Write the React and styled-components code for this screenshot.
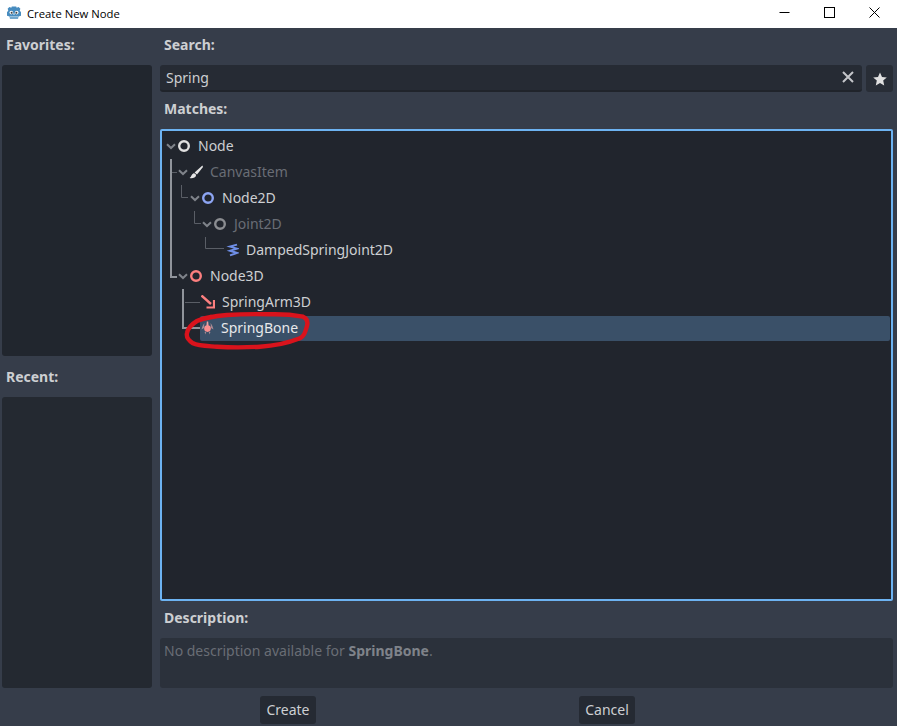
import styled, { createGlobalStyle } from "styled-components"

const GlobalStyle = createGlobalStyle`
    html, body {
        margin: 0;
        padding: 0;
        background: #363d4a;
    }
    * {
        box-sizing: border-box;
    }
`

const Ventana = styled.div`
    width: 897px;
    height: 726px;
    display: flex;
    flex-direction: column;
    overflow: hidden;
    background: #363d4a;
    color: #cdcfd2;
    font-family: "Noto Sans", sans-serif;
    font-size: 14px;
`

const BarraTitulo = styled.div`
    height: 28px;
    flex: none;
    display: flex;
    background: #ffffff;
    color: #000000;
`

const TituloApp = styled.div`
    flex: 1;
    display: flex;
    align-items: center;
    gap: 6px;
    padding: 0 0 2px 7px;
    height: 28px;
    font-family: "Open Sans", sans-serif;
    font-size: 11.3px;
`

const BtnVentana = styled.div`
    width: 45px;
    height: 24px;
    display: flex;
    align-items: center;
    justify-content: center;
`

const Cuerpo = styled.div`
    flex: 1;
    display: grid;
    grid-template-columns: 150px 733px;
    gap: 8px;
    padding: 0 4px 0 2px;
    min-height: 0;
`

const Columna = styled.div`
    display: flex;
    flex-direction: column;
    height: 660px;
`

const Etiqueta = styled.div`
    height: 20px;
    line-height: 20px;
    margin-top: ${props => props.top || 7}px;
    margin-bottom: ${props => props.bottom || 10}px;
    padding-left: 4px;
    font-weight: bold;
    flex: none;
`

const ListaLateral = styled.div`
    flex: 1;
    border-radius: 3px;
    background: ${props => props.color || '#21262e'};
`

const FilaBusqueda = styled.div`
    display: flex;
    gap: 4px;
    height: 27px;
    flex: none;
`

const CajaBusqueda = styled.div`
    flex: 1;
    display: flex;
    align-items: center;
    justify-content: space-between;
    padding: 0 8px 1px 6px;
    border-radius: 3px;
    background: #262b34;
    border-bottom: 2px solid #20242b;
`

const BtnEstrella = styled.div`
    width: 27px;
    display: flex;
    align-items: center;
    justify-content: center;
    border-radius: 3px;
    background: #282d36;
`

const Arbol = styled.div`
    position: relative;
    height: 472px;
    flex: none;
    padding-top: 2px;
    background: #21252d;
    border: 2px solid #6db3f2;
    border-radius: 2px;
`

const Fila = styled.div`
    height: 26px;
    display: flex;
    align-items: center;
    padding-left: ${props => 4 + props.$nivel * 12}px;
    color: ${props => props.$tenue ? '#696d75' : '#cdcfd2'};
`

const TextoNodo = styled.span`
    margin-bottom: 2px;
`

const Flecha = styled.span`
    width: 11px;
    height: 10px;
    flex: none;
    display: flex;
    align-items: center;
    visibility: ${props => props.$oculta ? 'hidden' : 'visible'};
`

const IconoNodo = styled.span`
    width: 14px;
    height: 14px;
    flex: none;
    display: flex;
    margin-right: 7px;
`

const Seleccion = styled.div`
    height: 25px;
    flex: 1;
    margin-right: 1px;
    display: flex;
    align-items: center;
    padding-left: 1px;
    margin-left: -1px;
    color: #e8e9eb;
    background: #3a5068;
    border-radius: 2px;
    ${IconoNodo} {
        margin-right: 6px;
    }
`

const Trazos = styled.svg`
    position: absolute;
    left: 0;
    top: 0;
    width: 100%;
    height: 100%;
    pointer-events: none;
`

const CajaDescripcion = styled.div`
    height: 50px;
    flex: none;
    padding: 3px 4px;
    line-height: 20px;
    color: #696d75;
    background: #2b313b;
    border-radius: 3px;
    b {
        font-weight: bold;
        color: #7f838a;
    }
`

const PieBotones = styled.div`
    position: absolute;
    left: 260px;
    top: 696px;
    display: flex;
    gap: 263px;
`

const Boton = styled.button`
    width: 56px;
    height: 28px;
    padding: 0 0 2px;
    border: none;
    border-radius: 3px;
    background: #252a33;
    color: #cdcfd2;
    font-family: inherit;
    font-size: 14px;
`

const Chevron = ({ color = '#7f838a' }) => (
    <svg width="10" height="10" viewBox="0 0 10 10">
        <path d="M1 3.2 L5 7 L9 3.2" fill="none" stroke={color} strokeWidth="2" />
    </svg>
)

const Aro = ({ color }) => (
    <svg width="14" height="14" viewBox="0 0 14 14">
        <circle cx="7" cy="7" r="4.8" fill="none" stroke={color} strokeWidth="2.4" />
    </svg>
)

const Pincel = () => (
    <svg width="14" height="14" viewBox="0 0 14 14">
        <path d="M13.4 0.6 L14 2 L8 9.6 L5.6 7.4 Z" fill="#e6e6e6" />
        <path d="M4.6 8.2 C6.2 8.2 7.2 9.4 7 10.6 C6.6 12.8 3.4 13.6 0.6 13 C2.4 12 2.4 9 4.6 8.2 Z" fill="#e6e6e6" />
    </svg>
)

const Resorte = () => (
    <svg width="14" height="14" viewBox="0 0 14 14">
        <path d="M12 1.6 L5 3.6 L12 5.6 L5 7.8 L12 10 L5 12.4" fill="none" stroke="#6f8fe8" strokeWidth="2" />
    </svg>
)

const BrazoResorte = () => (
    <svg width="14" height="14" viewBox="0 0 14 14">
        <path d="M0.5 0.5 L10 9" fill="none" stroke="#fc7f7f" strokeWidth="2.4" />
        <path d="M5.5 12.5 L13 12.5 L13 5" fill="none" stroke="#fc7f7f" strokeWidth="2.2" />
    </svg>
)

const Hueso = () => (
    <svg width="14" height="14" viewBox="0 0 14 14">
        <path d="M5.8 0.5 H7.2 L7.6 5 H5.4 Z" fill="#f0a0a0" />
        <path d="M3.4 2 C2 4 1 6 0.6 8.6 L3 7 Z M9.6 2 C11 4 12 6 12.4 8.6 L10 7 Z" fill="#a88a94" />
        <circle cx="6.5" cy="7.6" r="3.3" fill="#fc8f8f" />
        <path d="M3.6 11 L5.4 10.4 L4.4 13.4 Z M9.4 11 L7.6 10.4 L8.6 13.4 Z" fill="#a88a94" />
    </svg>
)

const LogoGodot = () => (
    <svg width="14" height="14" viewBox="0 0 14 14">
        <path d="M4.8 0.4 L9.2 0.4 L9.7 1.8 L11.6 0.9 L13.4 2.8 L12.7 4.6 L14 6.2 L14 9.8 L11.4 10.4 L11.1 12.8 L2.9 12.8 L2.6 10.4 L0 9.8 L0 6.2 L1.3 4.6 L0.6 2.8 L2.4 0.9 L4.3 1.8 Z" fill="#478cbf" />
        <circle cx="4.3" cy="6.6" r="1.8" fill="#ffffff" />
        <circle cx="9.7" cy="6.6" r="1.8" fill="#ffffff" />
        <circle cx="4.6" cy="6.8" r="1" fill="#414042" />
        <circle cx="9.4" cy="6.8" r="1" fill="#414042" />
        <path d="M6.4 7.2 H7.6 V8.8 H6.4 Z M3 10.4 H11 V11.2 H3 Z" fill="#e8f1f7" />
    </svg>
)

const Nodo = ({ nivel, icono, texto, tenue, hoja }) => (
    <Fila $nivel={nivel} $tenue={tenue}>
        <Flecha $oculta={hoja}><Chevron /></Flecha>
        <IconoNodo>{icono}</IconoNodo>
        <TextoNodo>{texto}</TextoNodo>
    </Fila>
)

// coordenadas de la pagina, el viewBox ya descuenta el borde del arbol
const GuiasArbol = () => (
    <Trazos viewBox="162 131 729 468">
        <g fill="none" stroke="#90949b" strokeWidth="2">
            <path d="M171 159 V277 H177" />
            <path d="M183 289 V328 H200" />
        </g>
        <g fill="none" stroke="#5a5e66" strokeWidth="1">
            <path d="M172 172.5 H177" />
            <path d="M181.5 185 V197.5 H188" />
            <path d="M194.5 211 V223.5 H201" />
            <path d="M205.5 237 V248.5 H224" />
            <path d="M185 302.5 H200" />
        </g>
        <path
            d="M197 321 C206 317 216 316 227 315 C242 314 256 314 270 314.3 C282 314 294 315 303 316.7 C308 319 308 323 306.7 327 C305 333 304 336 300 338.3 C288 343 274 346 260 346.7 C246 347.5 230 347.5 217 346.7 C208 346 198 346 193 343.3 C188 340 186 337 187 333 C188 328 192 324 197 321 C201 319 206 318 211 317"
            fill="none"
            stroke="#d9131c"
            strokeWidth="4.4"
            strokeLinecap="round"
        />
    </Trazos>
)

export default function App() {
    return (
        <Ventana>
            <GlobalStyle />
            <BarraTitulo>
                <TituloApp><LogoGodot />Create New Node</TituloApp>
                <BtnVentana>
                    <svg width="11" height="11" viewBox="0 0 11 11"><path d="M0.5 5.5 H10.5" stroke="#000" fill="none" /></svg>
                </BtnVentana>
                <BtnVentana>
                    <svg width="11" height="11" viewBox="0 0 11 11"><rect x="0.5" y="0.5" width="10" height="10" stroke="#000" fill="none" /></svg>
                </BtnVentana>
                <BtnVentana>
                    <svg width="11" height="11" viewBox="0 0 11 11"><path d="M0.5 0.5 L10.5 10.5 M10.5 0.5 L0.5 10.5" stroke="#000" fill="none" /></svg>
                </BtnVentana>
            </BarraTitulo>
            <Cuerpo>
                <Columna>
                    <Etiqueta>Favorites:</Etiqueta>
                    <ListaLateral />
                    <Etiqueta top={11}>Recent:</Etiqueta>
                    <ListaLateral color="#242931" />
                </Columna>
                <Columna>
                    <Etiqueta>Search:</Etiqueta>
                    <FilaBusqueda>
                        <CajaBusqueda>
                            Spring
                            <svg width="12" height="12" viewBox="0 0 12 12">
                                <path d="M1 1 L11 11 M11 1 L1 11" stroke="#c4c6ca" strokeWidth="2" fill="none" />
                            </svg>
                        </CajaBusqueda>
                        <BtnEstrella>
                            <svg width="14" height="14" viewBox="0 0 14 14">
                                <path d="M7 0.5 L9 4.9 L13.8 5.4 L10.2 8.6 L11.2 13.4 L7 11 L2.8 13.4 L3.8 8.6 L0.2 5.4 L5 4.9 Z" fill="#e0e0e0" />
                            </svg>
                        </BtnEstrella>
                    </FilaBusqueda>
                    <Etiqueta bottom={10}>Matches:</Etiqueta>
                    <Arbol>
                        <GuiasArbol />
                        <Nodo nivel={0} icono={<Aro color="#e0e0e0" />} texto="Node" />
                        <Nodo nivel={1} icono={<Pincel />} texto="CanvasItem" tenue />
                        <Nodo nivel={2} icono={<Aro color="#8da5f3" />} texto="Node2D" />
                        <Nodo nivel={3} icono={<Aro color="#8b8d91" />} texto="Joint2D" tenue />
                        <Nodo nivel={4} icono={<Resorte />} texto="DampedSpringJoint2D" hoja />
                        <Nodo nivel={1} icono={<Aro color="#fc7f7f" />} texto="Node3D" />
                        <Nodo nivel={2} icono={<BrazoResorte />} texto="SpringArm3D" hoja />
                        <Fila $nivel={2}>
                            <Flecha $oculta><Chevron /></Flecha>
                            <Seleccion>
                                <IconoNodo><Hueso /></IconoNodo>
                                <TextoNodo>SpringBone</TextoNodo>
                            </Seleccion>
                        </Fila>
                    </Arbol>
                    <Etiqueta>Description:</Etiqueta>
                    <CajaDescripcion>No description available for <b>SpringBone</b>.</CajaDescripcion>
                </Columna>
            </Cuerpo>
            <PieBotones>
                <Boton>Create</Boton>
                <Boton>Cancel</Boton>
            </PieBotones>
        </Ventana>
    )
}
